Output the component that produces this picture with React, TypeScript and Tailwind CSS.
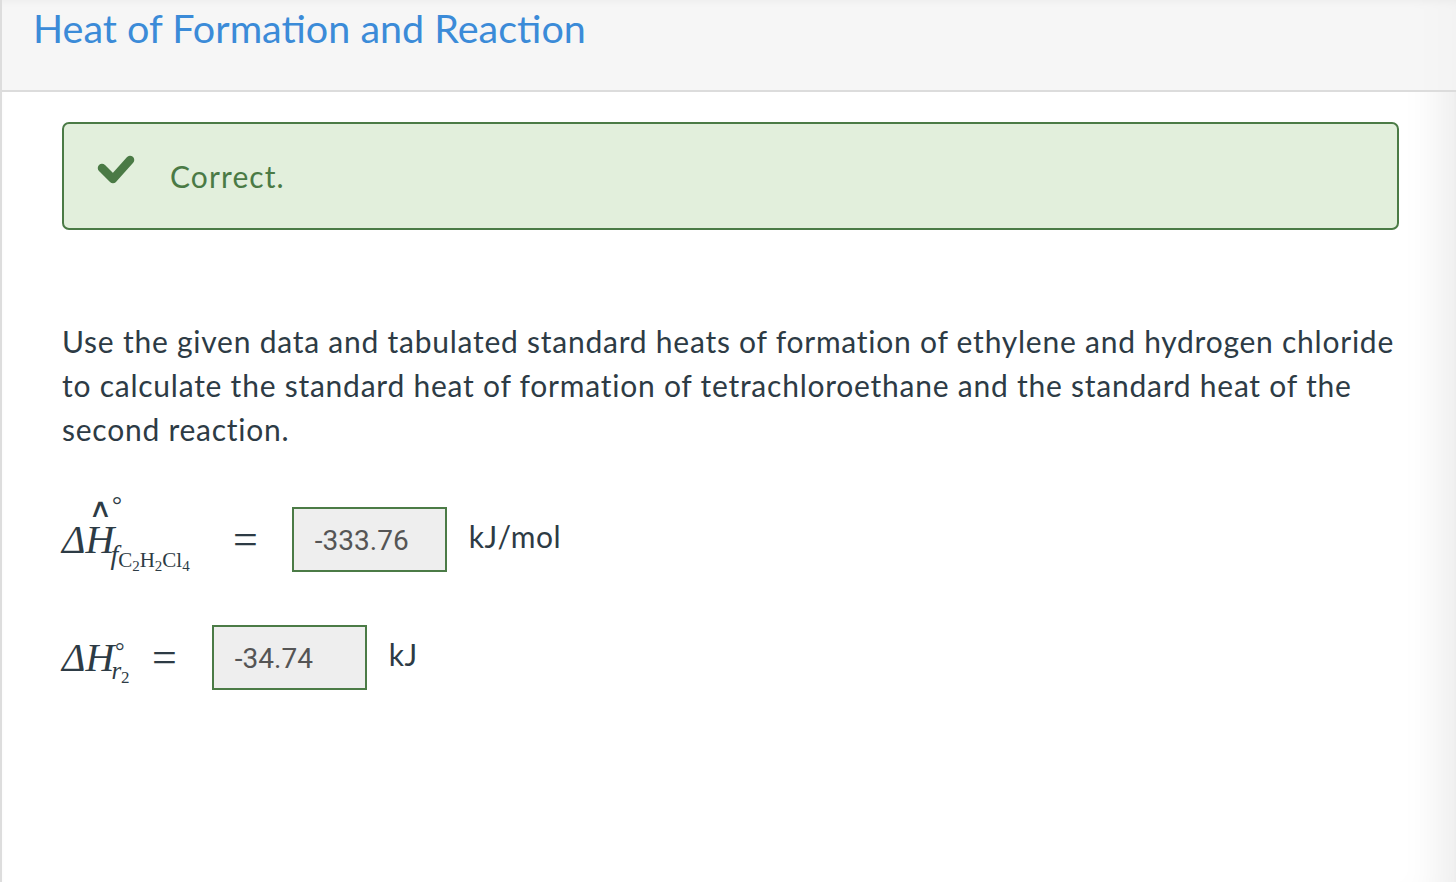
import React from 'react';

const serif = { fontFamily: '"Liberation Serif", "DejaVu Serif", serif' };

const CheckIcon = () => (
  <svg width="40" height="32" viewBox="0 0 40 32" className="shrink-0">
    <polyline
      points="6,15 17,26 34,7"
      fill="none"
      stroke="#4a7a45"
      strokeWidth="8.5"
      strokeLinecap="round"
      strokeLinejoin="round"
    />
  </svg>
);

const AnswerBox = ({ value }: { value: string }) => (
  <div className="w-[155px] h-[65px] border-2 border-[#4b7b46] bg-[#eeeeee] flex items-center pl-[21px] pt-[2px] text-[28px] text-[#555555] font-['Roboto',sans-serif]">
    {value}
  </div>
);

export default function App() {
  return (
    <div className="min-h-[882px] w-[1456px] bg-white border-l-2 border-[#dddddd] font-['Lato',sans-serif] shadow-[inset_-50px_0_40px_-35px_rgba(0,0,0,0.08),inset_0_7px_7px_-5px_rgba(0,0,0,0.18)]">
      <div className="h-[92px] bg-[#f4f4f4]/80 border-b-2 border-[#dcdcdc] pl-[31px]">
        <h1 className="text-[39.5px] leading-[56px] text-[#3b8bd8]">Heat of Formation and Reaction</h1>
      </div>

      <div className="pl-[60px] pr-[57px] pt-[30px]">
        <div className="h-[108px] rounded-[7px] border-2 border-[#4b7b46] bg-[#e2efdc] flex items-center pl-[32px]">
          <div className="-mt-[14px]">
            <CheckIcon />
          </div>
          <span className="ml-[34px] text-[30px] tracking-[1.1px] text-[#4a7a45]">Correct.</span>
        </div>

        <p className="mt-[89px] w-[1345px] text-[30px] leading-[44px] tracking-[0.76px] text-[#2d3b45]">
          Use the given data and tabulated standard heats of formation of ethylene and hydrogen chloride to calculate the standard heat of formation of tetrachloroethane and the standard heat of the second reaction.
        </p>

        <div className="mt-[56px] flex items-center">
          <div className="w-[171px] h-[64px] flex items-center text-[#2d3b45]" style={serif}>
            <span className="relative italic text-[40px] leading-none">
              ΔH
              <span className="absolute left-[29px] -top-[24px] not-italic text-[26px] leading-none scale-x-125">∧</span>
              <span className="absolute left-[50px] -top-[28px] not-italic text-[25px] leading-none">°</span>
            </span>
            <span className="relative top-[15px] -ml-[4px] italic text-[28px] leading-none">f</span>
            <span className="relative top-[21px] text-[21px] leading-none">
              C<sub className="text-[15px]">2</sub>H<sub className="text-[15px]">2</sub>Cl<sub className="text-[15px]">4</sub>
            </span>
          </div>
          <span className="text-[44px] text-[#2d3b45] leading-none" style={serif}>=</span>
          <div className="ml-[34px]">
            <AnswerBox value="-333.76" />
          </div>
          <span className="ml-[22px] text-[30px] tracking-[0.5px] text-[#2d3b45] -mt-[6px]">kJ/mol</span>
        </div>

        <div className="mt-[53px] flex items-center">
          <div className="w-[90px] h-[65px] flex items-center text-[#2d3b45]" style={serif}>
            <span className="relative italic text-[40px] leading-none">
              ΔH
              <span className="absolute left-[53px] top-[1px] not-italic text-[24px] leading-none">°</span>
            </span>
            <span className="relative top-[13px] -ml-[3px] italic text-[25px] leading-none">
              r<span className="not-italic text-[17px] relative top-[4px]">2</span>
            </span>
          </div>
          <span className="text-[44px] text-[#2d3b45] leading-none" style={serif}>=</span>
          <div className="ml-[35px]">
            <AnswerBox value="-34.74" />
          </div>
          <span className="ml-[22px] text-[30px] tracking-[0.5px] text-[#2d3b45] -mt-[6px]">kJ</span>
        </div>
      </div>
    </div>
  );
}
